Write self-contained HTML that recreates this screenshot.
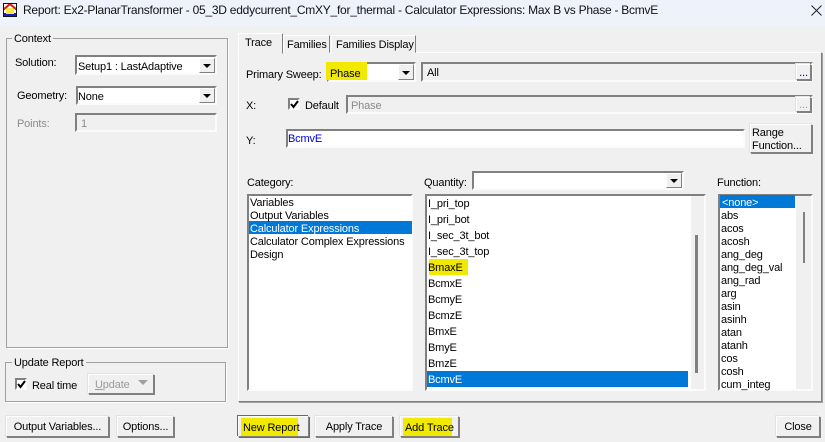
<!DOCTYPE html>
<html><head><meta charset="utf-8">
<style>
html,body{margin:0;padding:0}
body{width:825px;height:442px;overflow:hidden;background:#f0f0f0;position:relative;font-family:"Liberation Sans",sans-serif;font-size:11px;letter-spacing:-.15px;color:#000}
div,span.t{position:absolute;box-sizing:border-box;white-space:nowrap}
.t{line-height:13px;height:13px;margin-top:1px}
.sunk{border:2px solid;border-color:#808080 #fbfbfb #fbfbfb #808080}
.w{background:#fff}
.g{background:#f0f0f0}
.btn{background:#f0f0f0;border:1px solid;border-color:#fff #808080 #808080 #fff;box-shadow:1px 1px 0 #808080,-1px -1px 0 #e3e3e3;text-align:center}
.grp{border:1px solid #a0a0a0;box-shadow:1px 1px 0 #fff}
.arr{width:0;height:0;border-left:4px solid transparent;border-right:4px solid transparent;border-top:4px solid #000}
.drop{background:#f0f0f0;border:1px solid;border-color:#fff #808080 #808080 #fff;width:16px}
.y{background:#f2e900}
.sel{background:#0078d7}
.dis{color:#8a8a8a}
</style></head><body>
<div style="left:0;top:0;width:825px;height:26px;background:#eef2fb"></div>
<svg style="position:absolute;left:3px;top:3px" width="14" height="14" viewBox="0 0 14 14"><rect width="14" height="14" fill="#fff"/><rect x="0" y="10" width="14" height="4" fill="#1a1ac0"/><rect x="3" y="5" width="8" height="6" fill="#f4e842"/><path d="M0 7L7 1L14 7" fill="none" stroke="#d81818" stroke-width="2"/><rect x="0.5" y="0.5" width="13" height="13" fill="none" stroke="#111"/></svg>
<div class="t" style="left:23px;top:2px;font-size:12px;letter-spacing:-.25px;line-height:15px;height:15px;color:#111">Report: Ex2-PlanarTransformer - 05_3D eddycurrent_CmXY_for_thermal - Calculator Expressions: Max B vs Phase - BcmvE</div>
<svg style="position:absolute;left:811px;top:5px" width="11" height="11"><path d="M.5 .5L10.5 10.5M10.5 .5L.5 10.5" stroke="#222" stroke-width="1"/></svg>

<div class="grp" style="left:6px;top:38px;width:222px;height:310px"></div>
<div class="t g" style="left:12px;top:32px;padding:0 2px">Context</div>
<div class="t" style="left:15px;top:56px">Solution:</div>
<div class="sunk w" style="left:75px;top:55px;width:142px;height:20px"></div>
<div class="t" style="left:78px;top:60px">Setup1 : LastAdaptive</div>
<div class="drop" style="left:199px;top:58px;height:15px"></div><div class="arr" style="left:203px;top:64px"></div>
<div class="t" style="left:17px;top:89px">Geometry:</div>
<div class="sunk w" style="left:76px;top:86px;width:141px;height:19px"></div>
<div class="t" style="left:78px;top:90px">None</div>
<div class="drop" style="left:199px;top:88px;height:15px"></div><div class="arr" style="left:203px;top:94px"></div>
<div class="t dis" style="left:17px;top:117px">Points:</div>
<div class="sunk g" style="left:75px;top:113px;width:142px;height:19px"></div>
<div class="t dis" style="left:81px;top:117px">1</div>

<div class="grp" style="left:5px;top:362px;width:221px;height:40px"></div>
<div class="t g" style="left:12px;top:356px;padding:0 2px">Update Report</div>
<div class="sunk w" style="left:15px;top:378px;width:12px;height:12px"></div>
<svg style="position:absolute;left:16px;top:379px" width="11" height="11"><path d="M2 5L4.500 8L9 2" fill="none" stroke="#000" stroke-width="2"/></svg>
<div class="t" style="left:32px;top:379px">Real time</div>
<div class="btn" style="left:88px;top:374px;width:66px;height:20px"></div>
<div class="t" style="left:95px;top:378px;color:#9a9a9a"><u>U</u>pdate</div>
<div class="arr" style="left:138px;top:380px;border-top-color:#a0a0a0;border-left-width:5px;border-right-width:5px;border-top-width:5px"></div>

<div class="btn" style="left:6px;top:416px;width:103px;height:21px;line-height:21px">Output Variables...</div>
<div class="btn" style="left:117px;top:416px;width:57px;height:21px;line-height:21px">Options...</div>
<div class="btn" style="left:238px;top:416px;width:71px;height:21px;box-shadow:1px 1px 0 #696969,-1px -1px 0 #696969"></div>
<div class="y" style="left:241px;top:418px;width:57px;height:18px"></div>
<div class="t" style="left:243px;top:421px">New Report</div>
<div class="btn" style="left:315px;top:416px;width:78px;height:21px;line-height:21px">Apply Trace</div>
<div class="btn" style="left:400px;top:416px;width:59px;height:21px"></div>
<div class="y" style="left:403px;top:418px;width:49px;height:18px"></div>
<div class="t" style="left:405px;top:421px">Add Trace</div>
<div class="btn" style="left:776px;top:416px;width:44px;height:21px;line-height:21px">Close</div>

<div style="left:238px;top:52px;width:584px;height:350px;border:1px solid;border-color:#fff #808080 #808080 #fff;box-shadow:1px 1px 0 #a0a0a0"></div>
<div style="left:283px;top:35px;width:47px;height:18px;border:1px solid;border-color:#fff #808080 #f0f0f0 #fff"></div>
<div class="t" style="left:287px;top:38px">Families</div>
<div style="left:331px;top:35px;width:85px;height:18px;border:1px solid;border-color:#fff #808080 #f0f0f0 #fff"></div>
<div class="t" style="left:336px;top:38px">Families Display</div>
<div class="g" style="left:238px;top:33px;width:45px;height:21px;border:1px solid;border-color:#fff #808080 #f0f0f0 #fff"></div>
<div class="t" style="left:245px;top:36px">Trace</div>

<div class="t" style="left:246px;top:68px">Primary Sweep:</div>
<div class="sunk w" style="left:327px;top:62px;width:89px;height:20px"></div>
<div class="y" style="left:326px;top:62px;width:41px;height:18px"></div>
<div class="t" style="left:330px;top:67px">Phase</div>
<div class="drop" style="left:398px;top:64px;height:16px"></div><div class="arr" style="left:402px;top:71px"></div>
<div class="sunk g" style="left:421px;top:62px;width:392px;height:20px"></div>
<div class="t" style="left:427px;top:66px">All</div>
<div class="btn" style="left:796px;top:64px;width:15px;height:16px;color:#0000d0;line-height:16px">...</div>

<div class="t" style="left:246px;top:99px">X:</div>
<div class="sunk w" style="left:288px;top:98px;width:12px;height:12px"></div>
<svg style="position:absolute;left:289px;top:99px" width="11" height="11"><path d="M2 5L4.500 8L9 2" fill="none" stroke="#000" stroke-width="2"/></svg>
<div class="t" style="left:305px;top:99px">Default</div>
<div class="sunk g" style="left:346px;top:95px;width:467px;height:19px"></div>
<div class="t dis" style="left:351px;top:99px">Phase</div>
<div class="btn" style="left:796px;top:97px;width:15px;height:15px;color:#a0a0a0;line-height:15px">...</div>

<div class="t" style="left:246px;top:134px">Y:</div>
<div class="sunk w" style="left:286px;top:129px;width:459px;height:19px"></div>
<div class="t" style="left:288px;top:132px;color:#0000e0">BcmvE</div>
<div class="btn" style="left:750px;top:124px;width:62px;height:29px"></div>
<div class="t" style="left:752px;top:126px">Range</div>
<div class="t" style="left:752px;top:139px">Function...</div>

<div class="t" style="left:247px;top:176px">Category:</div>
<div class="sunk w" style="left:247px;top:194px;width:166px;height:197px"></div>
<div class="sel" style="left:249px;top:221px;width:163px;height:13px"></div>
<div class="t" style="left:250px;top:196px">Variables</div>
<div class="t" style="left:250px;top:209px">Output Variables</div>
<div class="t" style="left:250px;top:222px;color:#fff">Calculator Expressions</div>
<div class="t" style="left:250px;top:235px">Calculator Complex Expressions</div>
<div class="t" style="left:250px;top:248px">Design</div>

<div class="t" style="left:424px;top:176px">Quantity:</div>
<div class="sunk w" style="left:472px;top:171px;width:212px;height:19px"></div>
<div class="drop" style="left:666px;top:173px;height:15px"></div><div class="arr" style="left:670px;top:179px"></div>
<div class="sunk g" style="left:425px;top:194px;width:281px;height:197px"></div>
<div class="w" style="left:427px;top:196px;width:264px;height:193px"></div>
<div style="left:695px;top:235px;width:3px;height:138px;background:#808080"></div>
<div class="y" style="left:429px;top:259px;width:39px;height:16px"></div>
<div class="sel" style="left:427px;top:371px;width:261px;height:16px"></div>
<div class="t" style="left:428px;top:197px">I_pri_top</div>
<div class="t" style="left:428px;top:213px">I_pri_bot</div>
<div class="t" style="left:428px;top:229px">I_sec_3t_bot</div>
<div class="t" style="left:428px;top:245px">I_sec_3t_top</div>
<div class="t" style="left:428px;top:261px">BmaxE</div>
<div class="t" style="left:428px;top:277px">BcmxE</div>
<div class="t" style="left:428px;top:293px">BcmyE</div>
<div class="t" style="left:428px;top:309px">BcmzE</div>
<div class="t" style="left:428px;top:325px">BmxE</div>
<div class="t" style="left:428px;top:341px">BmyE</div>
<div class="t" style="left:428px;top:357px">BmzE</div>
<div class="t" style="left:428px;top:373px;color:#fff">BcmvE</div>

<div class="t" style="left:717px;top:176px">Function:</div>
<div class="sunk g" style="left:718px;top:194px;width:95px;height:197px"></div>
<div class="w" style="left:720px;top:196px;width:76px;height:193px"></div>
<div style="left:803px;top:212px;width:2px;height:51px;background:#808080"></div>
<div class="sel" style="left:720px;top:195px;width:75px;height:13px"></div>
<div class="t" style="left:722px;top:196px;color:#fff">&lt;none&gt;</div>
<div class="t" style="left:721px;top:209px">abs</div>
<div class="t" style="left:721px;top:222px">acos</div>
<div class="t" style="left:721px;top:235px">acosh</div>
<div class="t" style="left:721px;top:248px">ang_deg</div>
<div class="t" style="left:721px;top:261px">ang_deg_val</div>
<div class="t" style="left:721px;top:274px">ang_rad</div>
<div class="t" style="left:721px;top:287px">arg</div>
<div class="t" style="left:721px;top:300px">asin</div>
<div class="t" style="left:721px;top:313px">asinh</div>
<div class="t" style="left:721px;top:326px">atan</div>
<div class="t" style="left:721px;top:339px">atanh</div>
<div class="t" style="left:721px;top:352px">cos</div>
<div class="t" style="left:721px;top:365px">cosh</div>
<div class="t" style="left:721px;top:378px">cum_integ</div>
</body></html>
